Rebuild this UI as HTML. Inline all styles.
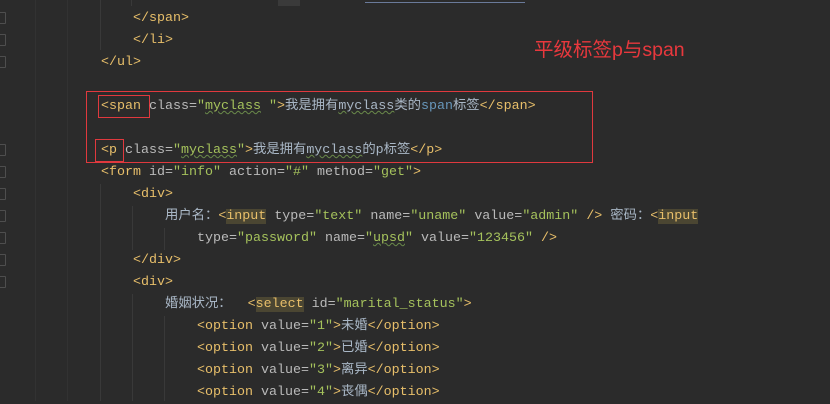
<!DOCTYPE html>
<html><head><meta charset="utf-8"><style>
body{margin:0;width:830px;height:401px;background:#2b2b2b;overflow:hidden;position:relative;font-family:"Liberation Mono","Noto Sans CJK SC",monospace;font-size:13.33px;}
.l{position:absolute;height:22px;line-height:22px;white-space:pre;color:#a9b7c6;margin-top:2px}
.t{color:#e8bf6a}.a{color:#bababa}.v{color:#a5c25c}.b{color:#6897bb}
.hl{background:#4b4632}
.vl{position:absolute;top:0;height:401px;width:1px;background:#323232}
.ig{position:absolute;width:1px;background:#393939}
.box{position:absolute;border:1px solid #e0393e}
.f{position:absolute;left:-4px;width:8px;height:10px;border:1px solid #4e4e4e;border-radius:1px}
.w{text-decoration:underline wavy #6a8a4a;text-decoration-thickness:1px}
</style></head><body>
<div class="vl" style="left:35px"></div>
<div class="vl" style="left:67px"></div>
<div class="ig" style="left:100px;top:0;height:50px"></div>
<div class="ig" style="left:131px;top:0;height:6px"></div>
<div class="ig" style="left:100px;top:184px;height:217px"></div>
<div class="ig" style="left:132px;top:206px;height:44px"></div>
<div class="ig" style="left:164px;top:228px;height:22px"></div>
<div class="ig" style="left:132px;top:294px;height:107px"></div>
<div class="ig" style="left:164px;top:316px;height:85px"></div>
<div class="f" style="top:12px"></div><div class="f" style="top:34px"></div><div class="f" style="top:56px"></div>
<div class="f" style="top:144px"></div><div class="f" style="top:166px"></div><div class="f" style="top:188px"></div><div class="f" style="top:210px"></div><div class="f" style="top:232px"></div><div class="f" style="top:254px"></div><div class="f" style="top:276px"></div>
<div style="position:absolute;left:278px;top:0;width:22px;height:6px;background:#3a3a3a"></div>
<div style="position:absolute;left:365px;top:2px;width:160px;height:1px;background:#6a7a9a"></div>
<div class="l" style="left:133px;top:6px"><span class="t">&lt;/span&gt;</span></div>
<div class="l" style="left:133px;top:28px"><span class="t">&lt;/li&gt;</span></div>
<div class="l" style="left:101px;top:50px"><span class="t">&lt;/ul&gt;</span></div>
<div style="position:absolute;left:534px;top:36px;color:#e8383d;font-family:'Liberation Sans','Noto Sans CJK SC',sans-serif;font-size:19.5px;line-height:28px">平级标签p与span</div>
<div class="box" style="left:86px;top:91px;width:505px;height:70px"></div>
<div class="box" style="left:98px;top:95px;width:50px;height:21px"></div>
<div class="box" style="left:95px;top:139px;width:27px;height:21px"></div>
<div class="l" style="left:101px;top:94px"><span class="t">&lt;span</span> <span class="a">class=</span><span class="v">"<span class="w">myclass</span> "</span><span class="t">&gt;</span>我是拥有<span class="w">myclass</span>类的<span class="b">span</span>标签<span class="t">&lt;/span&gt;</span></div>
<div class="l" style="left:101px;top:138px"><span class="t">&lt;p</span> <span class="a">class=</span><span class="v">"<span class="w">myclass</span>"</span><span class="t">&gt;</span>我是拥有<span class="w">myclass</span>的p标签<span class="t">&lt;/p&gt;</span></div>
<div class="l" style="left:101px;top:160px"><span class="t">&lt;form</span> <span class="a">id=</span><span class="v">"info"</span> <span class="a">action=</span><span class="v">"#"</span> <span class="a">method=</span><span class="v">"get"</span><span class="t">&gt;</span></div>
<div class="l" style="left:133px;top:182px"><span class="t">&lt;div&gt;</span></div>
<div class="l" style="left:165px;top:204px">用户名：<span class="t">&lt;<span class="hl">input</span></span> <span class="a">type=</span><span class="v">"text"</span> <span class="a">name=</span><span class="v">"uname"</span> <span class="a">value=</span><span class="v">"admin"</span> <span class="t">/&gt;</span> 密码：<span class="t">&lt;<span class="hl">input</span></span></div>
<div class="l" style="left:197px;top:226px"><span class="a">type=</span><span class="v">"password"</span> <span class="a">name=</span><span class="v">"<span class="w">upsd</span>"</span> <span class="a">value=</span><span class="v">"123456"</span> <span class="t">/&gt;</span></div>
<div class="l" style="left:133px;top:248px"><span class="t">&lt;/div&gt;</span></div>
<div class="l" style="left:133px;top:270px"><span class="t">&lt;div&gt;</span></div>
<div class="l" style="left:165px;top:292px">婚姻状况：  <span class="t">&lt;<span class="hl">select</span></span> <span class="a">id=</span><span class="v">"marital_status"</span><span class="t">&gt;</span></div>
<div class="l" style="left:197px;top:314px"><span class="t">&lt;option</span> <span class="a">value=</span><span class="v">"1"</span><span class="t">&gt;</span>未婚<span class="t">&lt;/option&gt;</span></div>
<div class="l" style="left:197px;top:336px"><span class="t">&lt;option</span> <span class="a">value=</span><span class="v">"2"</span><span class="t">&gt;</span>已婚<span class="t">&lt;/option&gt;</span></div>
<div class="l" style="left:197px;top:358px"><span class="t">&lt;option</span> <span class="a">value=</span><span class="v">"3"</span><span class="t">&gt;</span>离异<span class="t">&lt;/option&gt;</span></div>
<div class="l" style="left:197px;top:380px"><span class="t">&lt;option</span> <span class="a">value=</span><span class="v">"4"</span><span class="t">&gt;</span>丧偶<span class="t">&lt;/option&gt;</span></div>
</body></html>
